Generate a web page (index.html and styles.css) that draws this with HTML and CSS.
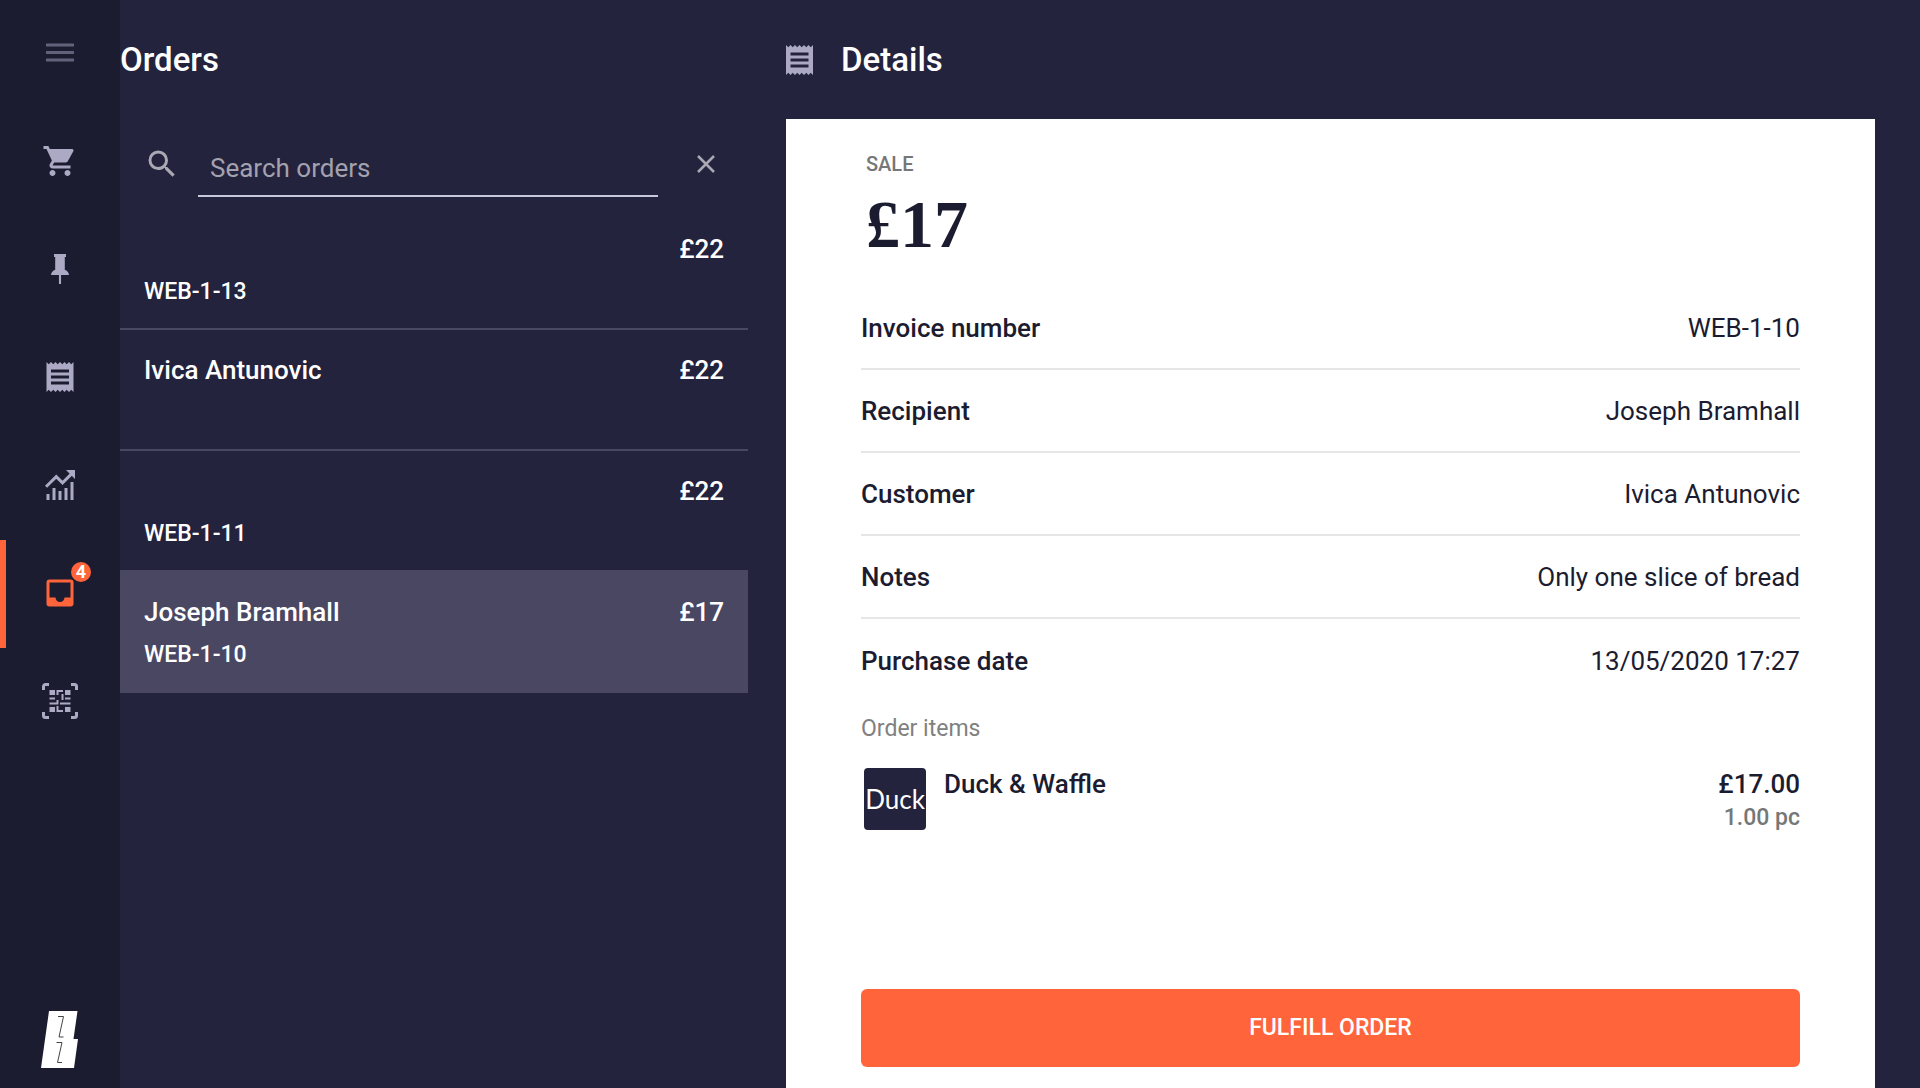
FILE: index.html
```html
<!DOCTYPE html>
<html lang="en">
<head>
    <meta charset="UTF-8">
    <meta name="viewport" content="width=device-width, initial-scale=1.0">
    <title>Orders</title>
    <link rel="stylesheet" href="styles.css">
</head>
<body>
    <div class="app">
        <nav class="sidebar">
            <button class="nav-item menu" aria-label="Menu">
                <svg width="28" height="20" viewBox="0 0 28 20"><path d="M1 2h26M1 9.500h26M1 17h26" stroke="currentColor" stroke-width="3" stroke-linecap="round"/></svg>
            </button>
            <a href="#" class="nav-item" aria-label="Sale">
                <svg class="icon" viewBox="0 0 24 24"><path d="M7 18c-1.100 0-1.990.9-1.990 2S5.900 22 7 22s2-.9 2-2-.9-2-2-2zM1 2v2h2l3.600 7.590-1.350 2.450c-.16.280-.25.610-.25.960 0 1.100.9 2 2 2h12v-2H7.420c-.14 0-.25-.11-.25-.25l.03-.12.900-1.630h7.450c.75 0 1.410-.41 1.750-1.030l3.580-6.490c.08-.14.120-.31.120-.48 0-.55-.45-1-1-1H5.210l-.94-2H1zm16 16c-1.100 0-1.990.9-1.990 2s.89 2 1.990 2 2-.9 2-2-.9-2-2-2z"/></svg>
            </a>
            <a href="#" class="nav-item" aria-label="Pinned">
                <svg class="icon" viewBox="0 0 24 24"><path d="M8 2h8v2h-.8v8.500c1.400.6 2.800 1.700 2.800 3.500h-5.300v6h-1.400v-6H6c0-1.800 1.400-2.900 2.800-3.500V4H8z"/></svg>
            </a>
            <a href="#" class="nav-item" aria-label="Receipts">
                <svg class="icon" viewBox="0 0 24 24"><path d="M18 17H6v-2h12v2zm0-4H6v-2h12v2zm0-4H6V7h12v2zM3 22l1.500-1.500L6 22l1.500-1.500L9 22l1.500-1.500L12 22l1.500-1.500L15 22l1.500-1.500L18 22l1.500-1.500L21 22V2l-1.500 1.500L18 2l-1.500 1.500L15 2l-1.500 1.500L12 2l-1.500 1.500L9 2 7.500 3.500 6 2 4.500 3.500 3 2v20z"/></svg>
            </a>
            <a href="#" class="nav-item" aria-label="Reports">
                <svg class="icon" viewBox="0 0 24 24"><path d="M3 18h2v4H3zM7 14h2v8H7zM11 16h2v6h-2zM15 14h2v8h-2zM19 10h2v12h-2z"/><path d="M2.700 13.200L9.500 6.400l4.200 4.200 6-6" fill="none" stroke="currentColor" stroke-width="2"/><path d="M16 2h6v6z"/></svg>
            </a>
            <a href="#" class="nav-item active" aria-label="Orders">
                <span class="icon-wrap">
                    <svg class="icon" viewBox="0 0 24 24"><path d="M19 3H5a2 2 0 0 0-2 2v14a2 2 0 0 0 2 2h14a2 2 0 0 0 2-2V5a2 2 0 0 0-2-2zm0 12h-4c0 1.660-1.350 3-3 3s-3-1.340-3-3H5V5h14v10z"/></svg>
                    <span class="badge">4</span>
                </span>
            </a>
            <a href="#" class="nav-item" aria-label="Scan code">
                <svg class="icon" viewBox="0 0 36 36"><path d="M1.500 7V3.500a2 2 0 0 1 2-2H7M29 1.500h3.500a2 2 0 0 1 2 2V7M34.500 29v3.500a2 2 0 0 1-2 2H29M7 34.500H3.500a2 2 0 0 1-2-2V29" fill="none" stroke="currentColor" stroke-width="3"/><path d="M7.500 7h5.500v5H7.500zM23 7h5.500v5H23zM7.500 24h5.500v5H7.500zM23 24h5.500v5H23z"/><path d="M15.500 12V8H21M20.500 11v6M7.500 15.500H13M23 15.500h5.500M7.500 20.500h8V17M18 20.500h10.500M15.500 23v5H21" fill="none" stroke="currentColor" stroke-width="2"/></svg>
            </a>
            <svg class="logo" width="38" height="58" viewBox="0 0 38 58"><path d="M8 0h28.500l-4 28H37l-4 29H0z" fill="#fff"/><path d="M17 5.500h5.500L18 26h4.500M15.500 31.500H21L16.500 51.500H21" fill="none" stroke="#444"/></svg>
        </nav>

        <section class="orders">
            <header class="panel-header">
                <h1>Orders</h1>
            </header>
            <form class="search">
                <label for="search" class="search-icon" aria-label="Search orders">
                    <svg class="icon" viewBox="0 0 24 24"><path d="M15.500 14h-.79l-.28-.27A6.471 6.471 0 0 0 16 9.500 6.500 6.500 0 1 0 9.500 16c1.610 0 3.090-.59 4.230-1.570l.27.280v.79l5 4.990L20.490 19l-4.990-5zm-6 0C7.010 14 5 11.990 5 9.500S7.010 5 9.500 5 14 7.010 14 9.500 11.990 14 9.500 14z"/></svg>
                </label>
                <input type="text" id="search" placeholder="Search orders">
                <button type="reset" class="search-icon" aria-label="Clear">
                    <svg class="icon" viewBox="0 0 36 36"><path d="M10 10l16 16M26 10L10 26" stroke="currentColor" stroke-width="2.500"/></svg>
                </button>
            </form>
            <ul class="order-list">
                <li>
                    <button class="order">
                        <span class="order-name"></span>
                        <span class="order-total">£22</span>
                        <span class="order-number">WEB-1-13</span>
                    </button>
                </li>
                <li>
                    <button class="order">
                        <span class="order-name">Ivica Antunovic</span>
                        <span class="order-total">£22</span>
                        <span class="order-number"></span>
                    </button>
                </li>
                <li>
                    <button class="order">
                        <span class="order-name"></span>
                        <span class="order-total">£22</span>
                        <span class="order-number">WEB-1-11</span>
                    </button>
                </li>
                <li>
                    <button class="order selected">
                        <span class="order-name">Joseph Bramhall</span>
                        <span class="order-total">£17</span>
                        <span class="order-number">WEB-1-10</span>
                    </button>
                </li>
            </ul>
        </section>

        <main class="details">
            <header class="panel-header">
                <svg class="receipt" viewBox="3 2 18 20"><path d="M18 17H6v-2h12v2zm0-4H6v-2h12v2zm0-4H6V7h12v2zM3 22l1.500-1.500L6 22l1.500-1.500L9 22l1.500-1.500L12 22l1.500-1.500L15 22l1.500-1.500L18 22l1.500-1.500L21 22V2l-1.500 1.500L18 2l-1.500 1.500L15 2l-1.500 1.500L12 2l-1.500 1.500L9 2 7.500 3.500 6 2 4.500 3.500 3 2v20z"/></svg>
                <h2>Details</h2>
            </header>
            <div class="card">
                <div class="sale">
                    <p class="sale-label">SALE</p>
                    <p class="sale-total">£17</p>
                </div>
                <dl class="info">
                    <div class="info-row">
                        <dt>Invoice number</dt>
                        <dd>WEB-1-10</dd>
                    </div>
                    <div class="info-row">
                        <dt>Recipient</dt>
                        <dd>Joseph Bramhall</dd>
                    </div>
                    <div class="info-row">
                        <dt>Customer</dt>
                        <dd>Ivica Antunovic</dd>
                    </div>
                    <div class="info-row">
                        <dt>Notes</dt>
                        <dd>Only one slice of bread</dd>
                    </div>
                    <div class="info-row">
                        <dt>Purchase date</dt>
                        <dd>13/05/2020 17:27</dd>
                    </div>
                </dl>
                <h3>Order items</h3>
                <div class="item">
                    <div class="item-thumb">Duck</div>
                    <p class="item-name">Duck &amp; Waffle</p>
                    <div class="item-amount">
                        <p class="item-price">£17.00</p>
                        <p class="item-quantity">1.00 pc</p>
                    </div>
                </div>
                <button class="fulfill">FULFILL ORDER</button>
            </div>
        </main>
    </div>
</body>
</html>
```
FILE: styles.css
```css
* {
    box-sizing: border-box;
}

body {
    margin: 0;
    font-family: Roboto, sans-serif;
    font-size: 26px;
    line-height: 32px;
    background-color: #24233d;
    color: #fff;
}

h1, h2, h3, p, ul, dl, dd {
    margin: 0;
    padding: 0;
}

button {
    font: inherit;
    color: inherit;
    background: none;
    border: none;
    padding: 0;
    cursor: pointer;
}

.app {
    display: flex;
    min-height: 100vh;
}

.icon {
    display: block;
    width: 36px;
    height: 36px;
    fill: currentColor;
}

/* Sidebar */
.sidebar {
    flex: 0 0 120px;
    display: flex;
    flex-direction: column;
    background-color: #1c1c30;
    padding-bottom: 19px;
}

.nav-item {
    height: 108px;
    display: flex;
    align-items: center;
    justify-content: center;
    padding-bottom: 2px;
    color: #aba9c4;
    border: solid transparent;
    border-width: 0 6px;
}

.menu {
    color: #63627a;
}

.nav-item.active {
    color: #ff643a;
    border-left-color: #ff643a;
}

.icon-wrap {
    position: relative;
}

.badge {
    position: absolute;
    top: -13px;
    right: -13px;
    width: 20px;
    height: 20px;
    border-radius: 50%;
    background-color: #ff643a;
    color: #fff;
    font-size: 18px;
    font-weight: 700;
    line-height: 20px;
    text-align: center;
}

.logo {
    margin: auto auto 0;
}

/* Orders */
.orders {
    flex: 0 0 628px;
}

.panel-header {
    height: 119px;
    display: flex;
    align-items: center;
    gap: 28px;
}

h1, h2 {
    font-size: 33px;
    font-weight: 500;
}

.search {
    display: flex;
    align-items: flex-start;
    padding: 24px 24px 12px;
}

.search-icon {
    height: 42px;
    display: flex;
    align-items: center;
    color: #a9a8b3;
}

.search input {
    flex: 1;
    min-width: 0;
    height: 54px;
    margin: 0 30px 0 18px;
    padding: 0 12px 2px;
    font: inherit;
    color: #fff;
    background: none;
    border: none;
    border-bottom: 2px solid #c9c7dc;
    outline: none;
}

.search input::placeholder {
    color: #a3a2ae;
    opacity: 1;
}

.order-list {
    list-style: none;
}

.order {
    width: 100%;
    display: grid;
    grid-template-columns: 1fr auto;
    grid-template-rows: 32px 32px;
    row-gap: 11px;
    padding: 24px 24px 20px;
    border-bottom: 2px solid #4a4763;
    font-weight: 500;
    text-align: left;
}

.order.selected {
    background-color: #4a4763;
}

.order-number {
    font-size: 23px;
}

/* Details */
.details {
    flex: 1;
    display: flex;
    flex-direction: column;
    padding: 0 45px 0 38px;
}

.receipt {
    width: 27px;
    height: 30px;
    fill: #aba9c4;
}

.card {
    flex: 1;
    display: flex;
    flex-direction: column;
    padding: 29px 75px 21px;
    background-color: #fff;
    color: #1c1c30;
}

.sale {
    padding: 0 5px;
    margin-bottom: 19px;
}

.sale-label {
    font-size: 20px;
    font-weight: 500;
    color: #757877;
}

.sale-total {
    font-family: "Liberation Serif", serif;
    font-size: 68px;
    font-weight: 700;
    line-height: 88px;
}

.info-row {
    display: flex;
    align-items: center;
    justify-content: space-between;
    height: 83px;
    border-bottom: 2px solid #e6e6e6;
}

.info-row:last-child {
    border-bottom: none;
}

dt {
    font-weight: 500;
}

h3 {
    margin: 11px 0 23px;
    font-size: 23px;
    font-weight: 400;
    color: #808080;
}

.item {
    display: flex;
    align-items: flex-start;
    margin-bottom: 24px;
}

.item-thumb {
    flex: 0 0 62px;
    height: 62px;
    margin: 0 18px 0 3px;
    border-radius: 4px;
    background-color: #24233d;
    color: #fff;
    font-family: Lato, sans-serif;
    font-size: 26px;
    line-height: 62px;
    text-align: center;
}

.item-name {
    flex: 1;
    font-weight: 500;
}

.item-amount {
    font-weight: 500;
    text-align: right;
}

.item-quantity {
    margin-top: 2px;
    font-size: 23px;
    color: #757877;
}

.fulfill {
    height: 78px;
    margin-top: auto;
    border-radius: 6px;
    background-color: #ff643a;
    color: #fff;
    font-size: 23px;
    font-weight: 500;
}
```
